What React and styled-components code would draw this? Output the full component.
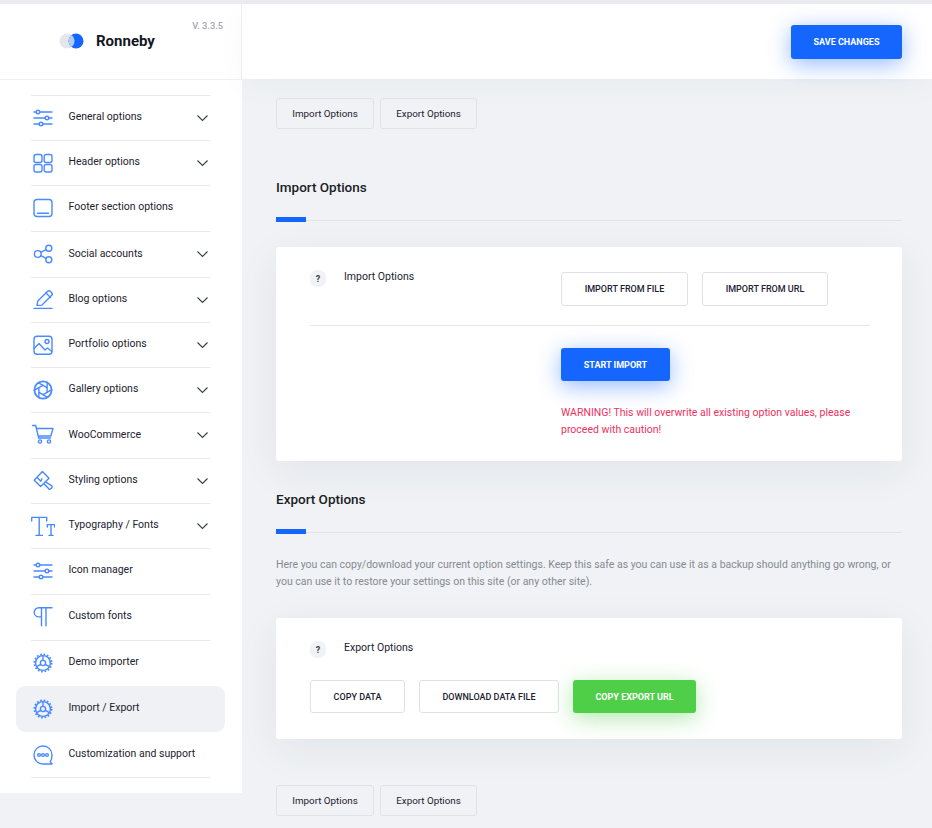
import React from "react";
import styled, { createGlobalStyle } from "styled-components";

const Global = createGlobalStyle`
  html, body { margin: 0; padding: 0; background: #f0f2f5; }
  body { font-family: Roboto, "Liberation Sans", sans-serif; color: #1d2230; overflow: hidden; }
  * { box-sizing: border-box; }
`;

const Page = styled.div`
  display: flex;
  align-items: flex-start;
  padding-top: 4px;
  height: 828px;
  background: linear-gradient(#eaecef 0 4px, #f0f2f5 4px);
`;
const Sidebar = styled.aside`
  width: 242px;
  flex: none;
  background: #fff;
`;
const Brand = styled.div`
  height: 76px;
  display: flex;
  align-items: center;
  padding: 0 18px 2px 59px;
  border-bottom: 1px solid #eef0f2;
  border-right: 1px solid #eef0f2;
`;
const BrandName = styled.span`
  margin-left: 12px;
  font-size: 15px;
  font-weight: 700;
  color: #14171f;
`;
const Version = styled.span`
  margin-left: auto;
  align-self: flex-start;
  margin-top: 16px;
  font-size: 9.25px;
  font-weight: 500;
  color: #a4a8ae;
`;
const Nav = styled.nav`
  padding: 15px 17px 15px 16px;
  display: flex;
  flex-direction: column;
`;
const Row = styled.a`
  display: flex;
  align-items: center;
  height: ${p => p.$h}px;
  padding: 0 17px 0 15px;
  position: relative;
  border-radius: ${p => (p.$active ? "9px" : "0")};
  background: ${p => (p.$active ? "#f0f1f4" : "transparent")};
  &::before {
    content: "";
    display: ${p => (p.$line ? "block" : "none")};
    position: absolute;
    top: 0;
    left: 15px;
    right: 15px;
    height: 1px;
    background: #e8e9ec;
  }
  &::after {
    content: "";
    display: ${p => (p.$last ? "block" : "none")};
    position: absolute;
    bottom: 0;
    left: 15px;
    right: 15px;
    height: 1px;
    background: #e8e9ec;
  }
`;
const IconBox = styled.svg`
  width: 24px;
  height: 24px;
  flex: none;
  fill: none;
  stroke: #4a8aff;
  stroke-width: 1.4;
  stroke-linecap: round;
  stroke-linejoin: round;
`;
const Label = styled.span`
  margin: 0 0 ${p => (p.$plain ? 3 : 2)}px 13.5px;
  font-size: 10.5px;
  color: #1d2230;
  white-space: nowrap;
`;
const Chevron = styled.svg`
  width: 11px;
  height: 6px;
  margin-left: auto;
  flex: none;
  fill: none;
  stroke: #3a3e47;
  stroke-width: 1.1;
`;

const Right = styled.div`
  flex: 1;
  min-width: 0;
`;
const TopBar = styled.header`
  height: 75px;
  background: #fff;
  display: flex;
  justify-content: flex-end;
  align-items: flex-start;
  padding: 21px 30px 0 0;
  box-shadow: 0 8px 30px rgba(40, 60, 90, 0.03);
`;
const Solid = styled.button`
  width: ${p => p.$w}px;
  height: ${p => p.$hh}px;
  border: 0;
  border-radius: 3px;
  background: ${p => (p.$green ? "#4fce48" : "#1466ff")};
  box-shadow: ${p =>
    p.$green ? "0 5px 22px rgba(79,206,72,.45)" : "0 5px 22px rgba(20,102,255,.45)"};
  color: #fff;
  font: 700 9px Roboto, sans-serif;
  padding: 0 0 ${p => p.$lift || 0}px;
`;
const Main = styled.main`
  padding: 19px 30px 0 34px;
`;
const Tabs = styled.div`
  display: flex;
  gap: 6px;
  margin-top: ${p => p.$mt || 0}px;
`;
const Tab = styled.button`
  width: ${p => p.$w}px;
  height: 31px;
  border: 1px solid #e0e2e7;
  border-radius: 3px;
  background: transparent;
  color: #1d2230;
  font: 400 9.8px Roboto, sans-serif;
  padding: 0;
`;
const SectionTitle = styled.h2`
  margin: ${p => p.$mt}px 0 0;
  font-size: 13.5px;
  line-height: 18px;
  font-weight: 500;
  color: #1a1d26;
`;
const Rule = styled.div`
  position: relative;
  height: 1px;
  margin-top: 24px;
  background: #e0e2e7;
  &::before {
    content: "";
    position: absolute;
    left: 0;
    top: -3px;
    width: 30px;
    height: 5px;
    background: #1466ff;
  }
`;
const Card = styled.section`
  background: #fff;
  border-radius: 3px;
  margin-top: ${p => p.$mt}px;
  padding: ${p => p.$pad};
  box-shadow: 0 10px 40px rgba(40, 60, 90, 0.07);
`;
const ImportTop = styled.div`
  display: grid;
  grid-template-columns: 251px 1fr;
  padding-bottom: 19px;
  border-bottom: 1px solid #e5e6ea;
`;
const Field = styled.div`
  display: flex;
  align-items: flex-start;
  gap: 18px;
  margin-top: ${p => p.$mt || 0}px;
`;
const Help = styled.span`
  width: 16px;
  height: 17px;
  border-radius: 7px;
  background: #f0f2f5;
  font-size: 9px;
  font-weight: 700;
  color: #3a3e47;
  display: flex;
  align-items: center;
  justify-content: center;
  padding-top: 1px;
`;
const FieldName = styled.span`
  font-size: 10.5px;
  line-height: 14px;
  color: #1d2230;
`;
const BtnRow = styled.div`
  display: flex;
  gap: ${p => p.$gap}px;
  margin-top: ${p => p.$mt || 0}px;
`;
const Outline = styled.button`
  width: ${p => p.$w}px;
  height: ${p => p.$hh}px;
  border: 1px solid #dfe1e6;
  border-radius: 3px;
  background: #fff;
  color: #1d2230;
  font: 500 9px Roboto, sans-serif;
  padding: 0;
`;
const ImportBottom = styled.div`
  padding: 22px 0 0 251px;
`;
const Warn = styled.p`
  margin: 23px 0 0;
  font-size: 10.5px;
  line-height: 17px;
  color: #f0305f;
`;
const Desc = styled.p`
  margin: 23px 0 0;
  font-size: 10.5px;
  line-height: 17px;
  color: #868a92;
`;

const blades = "M12 7.3L7.2 4.6M16.1 9.65l.1-5.4M16.1 14.35l4.7-2.7M12 16.7l4.8 2.7M7.9 14.35l-.1 5.4M7.9 9.65l-4.7 2.7";
const IC = {
  sliders: <><path d="M3 6h2.2M8.8 6H21M3 12h11.2M17.8 12H21M3 18h5.2M11.8 18H21"/><circle cx="7" cy="6" r="1.8"/><circle cx="16" cy="12" r="1.8"/><circle cx="10" cy="18" r="1.8"/></>,
  grid: <><rect x="3" y="3.5" width="8" height="8" rx="2"/><rect x="13.2" y="3.5" width="7.8" height="8" rx="2"/><rect x="3" y="13.5" width="8" height="7.5" rx="2"/><rect x="13.2" y="13.5" width="7.8" height="7.5" rx="2"/></>,
  footer: <><rect x="3" y="3.5" width="18" height="17" rx="3"/><path d="M6.5 17.2h11"/></>,
  share: <><circle cx="6.8" cy="12" r="3.4"/><circle cx="17.8" cy="6.3" r="3"/><circle cx="17.8" cy="17.7" r="3"/><path d="M9.8 10.4l5.3-2.8M9.8 13.6l5.3 2.8"/></>,
  pencil: <><path d="M3 20.4h18M6 17.4l.8-4.3L16.4 3.5c.9-.9 2.3-.9 3.2 0l.9.9c.9.9.9 2.3 0 3.2L11 17.1z"/><path d="M15 5l4.5 4.5"/></>,
  image: <><rect x="3" y="3.2" width="18" height="18" rx="3"/><circle cx="16" cy="8.5" r="2"/><path d="M3 15.5l5-5 6 6.5 2.5-2 4.5 3.5"/></>,
  aperture: <><circle cx="12" cy="12" r="8.6" strokeWidth="1.8"/><path d="M12 7.3l4.1 2.35v4.7L12 16.7l-4.1-2.35v-4.7z"/><path d={blades}/></>,
  cart: <><path d="M1.5 2.5h3.2l3 12.5h11.8M5.5 5.5H22l-2.2 7.5H7.3"/><circle cx="9" cy="18.5" r="1.6"/><circle cx="18" cy="18.5" r="1.6"/></>,
  roller: <><path d="M3.2 11.2L11.4 2.6l6.6 6.6-8.4 8.2zM6.8 9.2l3 3 1.2-2.4"/><path d="M15 13.2l5.4 3.4c1 .7.9 1.6.2 2.3l-.9.9c-.7.7-1.5.6-2.1-.2L13.2 15"/></>,
  type: <><path d="M0.7 7V3.4h15V7M8.2 3.4v18M5 21.4h6.4M16.3 13v-2.4h7.3V13M20 10.6v10.8M18 21.4h4"/></>,
  pilcrow: <><path d="M21 2.7H7.8a4.6 4.6 0 0 0 0 9.2h2.7M10.5 2.7v18M15 2.7v18"/></>,
  gear: <><circle cx="12" cy="12" r="7.4"/><circle cx="12" cy="12" r="8.6" strokeWidth="1.8" strokeDasharray="1.7 1.7" strokeLinecap="butt"/><circle cx="12" cy="12" r="2.6"/><path d="M12 9.4V4.8M14.3 13.3l4 2.3M9.7 13.3l-4 2.3"/></>,
  chat: <><path d="M12 3C6.9 3 3 7 3 12s3.9 9 9 9h9l-1.7-2.4C20.4 17 21 14.6 21 12c0-5-4-9-9-9z"/><circle cx="8" cy="12" r="1.4"/><circle cx="12" cy="12" r="1.4"/><circle cx="16" cy="12" r="1.4"/></>,
};

const items = [
  ["General options", "sliders", 45, 1],
  ["Header options", "grid", 45, 1],
  ["Footer section options", "footer", 46, 0],
  ["Social accounts", "share", 46, 1],
  ["Blog options", "pencil", 45, 1],
  ["Portfolio options", "image", 45, 1],
  ["Gallery options", "aperture", 45, 1],
  ["WooCommerce", "cart", 46, 1],
  ["Styling options", "roller", 45, 1],
  ["Typography / Fonts", "type", 45, 1],
  ["Icon manager", "sliders", 46, 0],
  ["Custom fonts", "pilcrow", 46, 0],
  ["Demo importer", "gear", 46, 0],
  ["Import / Export", "gear", 46, 0, "active"],
  ["Customization and support", "chat", 46, 0, "last"],
];

const Logo = () => (
  <svg width="25" height="16" viewBox="0 0 25 16" style={{ flex: "none" }}>
    <circle cx="8" cy="8" r="7.5" fill="#e3e6ea" />
    <circle cx="17" cy="8" r="7.5" fill="#1466ff" />
    <path d="M12.5 2a7.5 7.5 0 0 1 0 12 7.5 7.5 0 0 1 0-12z" fill="#b4cbf4" />
  </svg>
);

export default function App() {
  return (
    <>
      <Global />
      <Page>
        <Sidebar>
          <Brand>
            <Logo />
            <BrandName>Ronneby</BrandName>
            <Version>V. 3.3.5</Version>
          </Brand>
          <Nav>
            {items.map(([label, icon, h, arrow, flag]) => (
              <Row key={label} $h={h} $active={flag === "active"} $last={flag === "last"} $line={flag !== "active" && flag !== "last"}>
                <IconBox viewBox="0 0 24 24">{IC[icon]}</IconBox>
                <Label $plain={!arrow}>{label}</Label>
                {arrow ? (
                  <Chevron viewBox="0 0 11 6"><path d="M.5.5l5 5 5-5" /></Chevron>
                ) : null}
              </Row>
            ))}
          </Nav>
        </Sidebar>
        <Right>
          <TopBar>
            <Solid $w={111} $hh={34} $lift={1}>SAVE CHANGES</Solid>
          </TopBar>
          <Main>
            <Tabs>
              <Tab $w={98}>Import Options</Tab>
              <Tab $w={97}>Export Options</Tab>
            </Tabs>
            <SectionTitle $mt={49}>Import Options</SectionTitle>
            <Rule />
            <Card $mt={26} $pad="25px 32px 23px 34px">
              <ImportTop>
                <Field $mt={-2}>
                  <Help>?</Help>
                  <FieldName>Import Options</FieldName>
                </Field>
                <BtnRow $gap={14}>
                  <Outline $w={127} $hh={34}>IMPORT FROM FILE</Outline>
                  <Outline $w={126} $hh={34}>IMPORT FROM URL</Outline>
                </BtnRow>
              </ImportTop>
              <ImportBottom>
                <Solid $w={109} $hh={33}>START IMPORT</Solid>
                <Warn>WARNING! This will overwrite all existing option values, please proceed with caution!</Warn>
              </ImportBottom>
            </Card>
            <SectionTitle $mt={29}>Export Options</SectionTitle>
            <Rule />
            <Desc>Here you can copy/download your current option settings. Keep this safe as you can use it as a backup should anything go wrong, or you can use it to restore your settings on this site (or any other site).</Desc>
            <Card $mt={28} $pad="23px 32px 26px 34px">
              <Field>
                <Help>?</Help>
                <FieldName>Export Options</FieldName>
              </Field>
              <BtnRow $gap={14} $mt={22}>
                <Outline $w={95} $hh={33}>COPY DATA</Outline>
                <Outline $w={140} $hh={33}>DOWNLOAD DATA FILE</Outline>
                <Solid $green $w={123} $hh={33}>COPY EXPORT URL</Solid>
              </BtnRow>
            </Card>
            <Tabs $mt={46}>
              <Tab $w={98}>Import Options</Tab>
              <Tab $w={97}>Export Options</Tab>
            </Tabs>
          </Main>
        </Right>
      </Page>
    </>
  );
}
